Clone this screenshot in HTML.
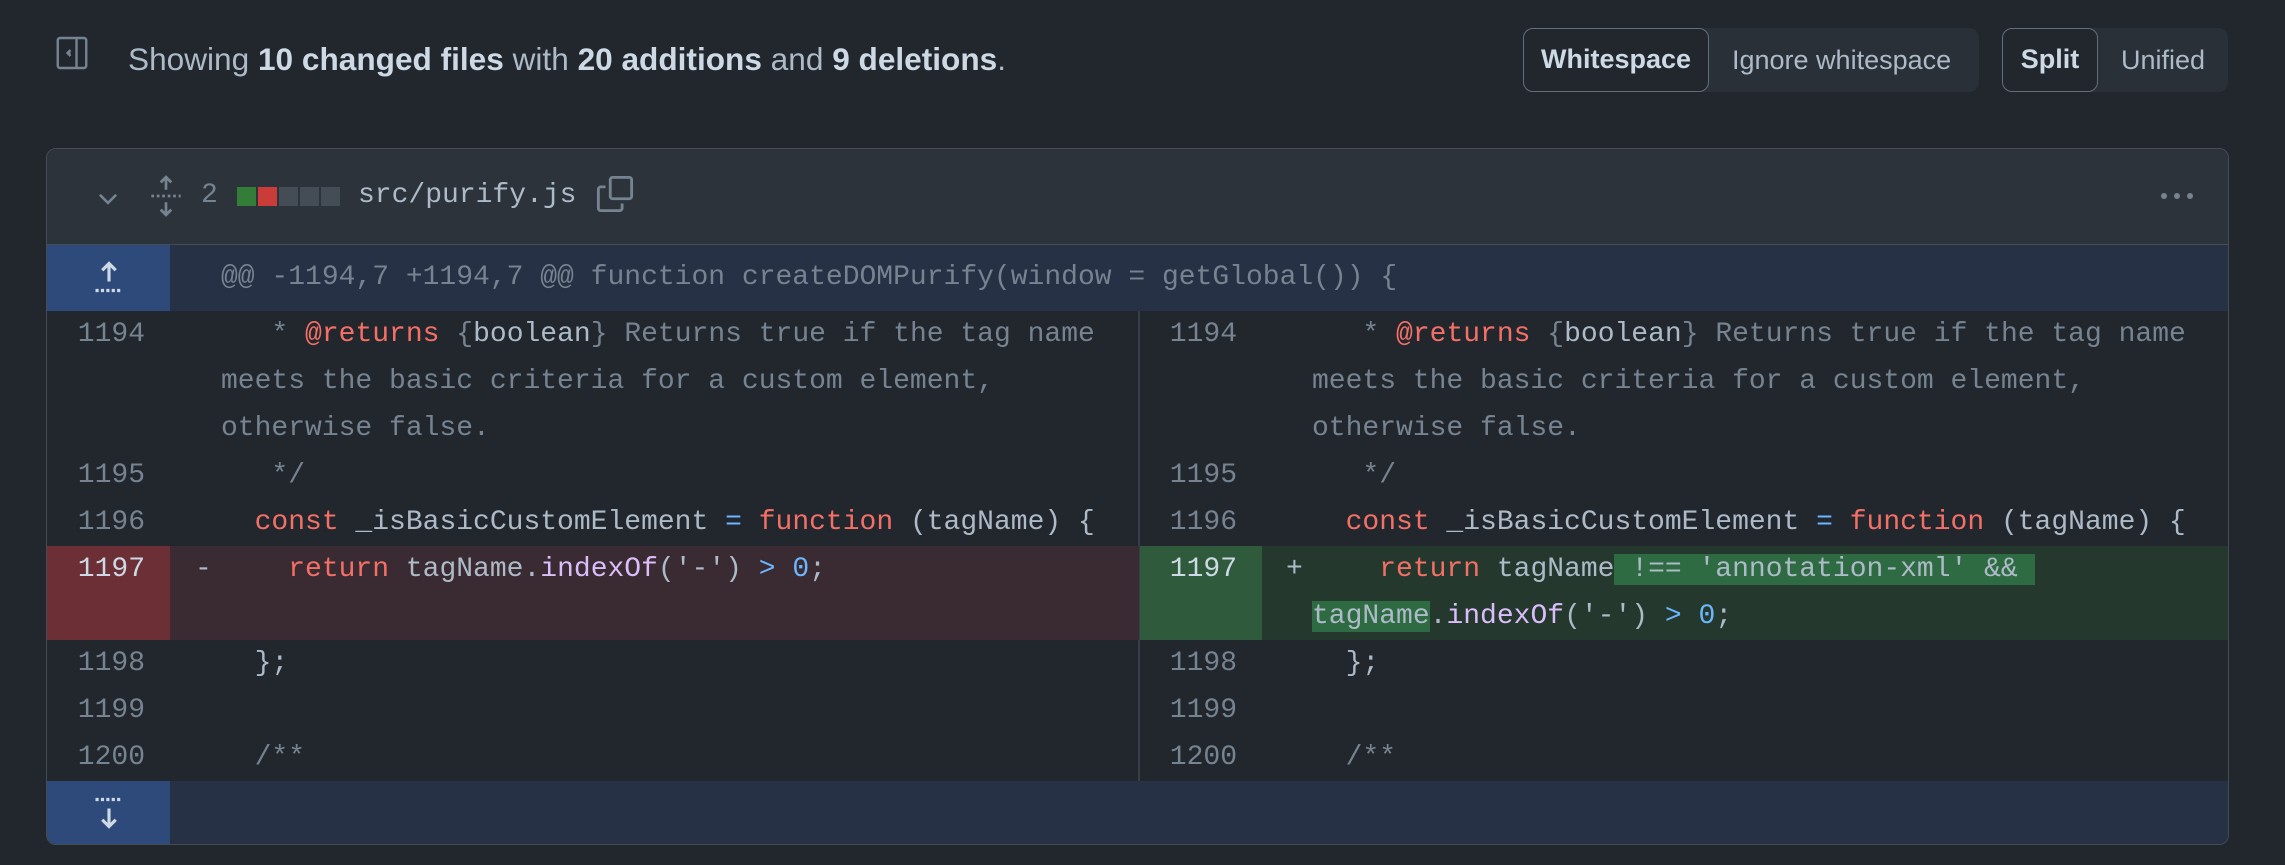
<!DOCTYPE html>
<html><head><meta charset="utf-8"><style>
*{margin:0;padding:0;box-sizing:border-box}
body{width:2285px;height:865px;background:#22272e;position:relative;overflow:hidden;font-family:"Liberation Sans",sans-serif;color:#adbac7}
.abs{position:absolute}
.summary{left:128px;top:38px;font-size:31.6px;line-height:42px;color:#adbac7;white-space:nowrap}
.summary b{color:#cdd9e5}
.grp{position:absolute;top:28px;height:64px;background:#2a3038;border-radius:10px}
.sel{position:absolute;top:28px;height:64px;border:1.5px solid #636e7b;border-radius:10px;background:#22272e;font-weight:bold;color:#cdd9e5;font-size:27px;line-height:61px;text-align:center}
.opt{position:absolute;top:28px;height:64px;font-size:27px;line-height:64px;color:#adbac7;white-space:nowrap}
.card{left:46px;top:148px;width:2183px;height:697px;border:1.5px solid #444c56;border-radius:10px;overflow:hidden;background:#22272e}
.hdr{position:absolute;left:0;top:0;width:100%;height:96px;background:#2d333b;border-bottom:1.5px solid #444c56}
.mono{font-family:"Liberation Mono",monospace;font-size:28px;white-space:pre}
.hunk{position:absolute;left:0;top:96px;width:100%;height:66px;background:#263145}
.hg{position:absolute;left:0;width:123px;background:#2e4a7a}
.row{position:absolute;left:0;width:100%;line-height:47px}
.ln{position:absolute;width:98px;text-align:right;color:#768390}
.code{position:absolute;color:#adbac7}
.k{color:#f47067}.c{color:#768390}.f{color:#dcbdfb}.b{color:#6cb6ff}
.hl{background:#2f6b42}
</style></head><body>
<svg class="abs" style="left:54px;top:35px" width="36" height="36" viewBox="0 0 24 24" fill="none" stroke="#768390" stroke-width="1.6"><rect x="2.5" y="2" width="19" height="20" rx="1.5"/><line x1="15" y1="2" x2="15" y2="22"/><path d="M11 10l-2 2 2 2" fill="#768390"/></svg>
<div class="abs summary">Showing <b>10 changed files</b> with <b>20 additions</b> and <b>9 deletions</b>.</div>

<div class="grp" style="left:1523px;width:456px"></div>
<div class="sel" style="left:1523px;width:186px">Whitespace</div>
<div class="opt" style="left:1732px">Ignore whitespace</div>
<div class="grp" style="left:2002px;width:226px"></div>
<div class="sel" style="left:2002px;width:96px">Split</div>
<div class="opt" style="left:2121px">Unified</div>

<div class="abs card">
 <div class="hdr">
  <svg class="abs" style="left:48px;top:36px" width="26" height="26" viewBox="0 0 16 16" fill="none" stroke="#768390" stroke-width="1.6"><path d="M3 6l5 5 5-5"/></svg>
  <svg class="abs" style="left:102px;top:26px" width="34" height="42" viewBox="0 0 16 20" fill="none" stroke="#768390" stroke-width="1.3"><path d="M8 1v6M5.5 3.5L8 1l2.5 2.5M8 19v-6M5.5 16.5L8 19l2.5-2.5"/><path d="M1 10h14" stroke-dasharray="1.3 1.3"/></svg>
  <div class="abs mono" style="left:154px;top:27px;color:#768390;line-height:40px">2</div>
  <div class="abs" style="left:190px;top:38px;width:19px;height:19px;background:#347d39"></div>
  <div class="abs" style="left:211px;top:38px;width:19px;height:19px;background:#c93c37"></div>
  <div class="abs" style="left:232px;top:38px;width:19px;height:19px;background:#444c56"></div>
  <div class="abs" style="left:253px;top:38px;width:19px;height:19px;background:#444c56"></div>
  <div class="abs" style="left:274px;top:38px;width:19px;height:19px;background:#444c56"></div>
  <div class="abs mono" style="left:311px;top:27px;color:#adbac7;line-height:40px">src/purify.js</div>
  <svg class="abs" style="left:549px;top:25px" width="38" height="40" viewBox="0 0 16 16" fill="none" stroke="#768390" stroke-width="1.2"><rect x="6" y="1" width="9" height="9" rx="1"/><path d="M4 5H2a1 1 0 0 0-1 1v8a1 1 0 0 0 1 1h8a1 1 0 0 0 1-1v-2"/></svg>
  <svg class="abs" style="left:2110px;top:41px" width="40" height="12" viewBox="0 0 40 12" fill="#768390"><circle cx="7" cy="6" r="3"/><circle cx="20" cy="6" r="3"/><circle cx="33" cy="6" r="3"/></svg>
 </div>
 <div class="hunk">
  <div class="hg" style="top:0;height:66px"></div>
  <svg class="abs" style="left:44px;top:14px" width="36" height="36" viewBox="0 0 16 16" fill="none" stroke="#cdd9e5" stroke-width="1.4"><path d="M8 10V2M5 5l3-3 3 3"/><path d="M2 14h12" stroke-dasharray="1.4 1"/></svg>
  <div class="abs mono" style="left:174px;top:9px;line-height:47px;color:#768390">@@ -1194,7 +1194,7 @@ function createDOMPurify(window = getGlobal()) {</div>
 </div>

 <div class="abs" style="left:1091px;top:162px;width:1.5px;height:470px;background:#373e47"></div>
 <div class="abs" style="left:0;top:397px;width:1092px;height:94px;background:#3a2a31"></div>
 <div class="abs" style="left:0;top:397px;width:123px;height:94px;background:#6b2f35"></div>
 <div class="abs" style="left:1093px;top:397px;width:1090px;height:94px;background:#24382d"></div>
 <div class="abs" style="left:1093px;top:397px;width:122px;height:94px;background:#2f5a3b"></div>

 <div class="mono">
 <div class="row" style="top:162px"><span class="ln" style="left:0">1194</span><span class="code" style="left:174px">   <span class="c">*</span> <span class="k">@returns</span> <span class="c">{</span>boolean<span class="c">} Returns true if the tag name
meets the basic criteria for a custom element,
otherwise false.</span></span></div>
 <div class="row" style="top:303px"><span class="ln" style="left:0">1195</span><span class="code c" style="left:174px">   */</span></div>
 <div class="row" style="top:350px"><span class="ln" style="left:0">1196</span><span class="code" style="left:174px">  <span class="k">const</span> _isBasicCustomElement <span class="b">=</span> <span class="k">function</span> (tagName) {</span></div>
 <div class="row" style="top:397px"><span class="ln" style="left:0;color:#cdd9e5">1197</span><span class="code" style="left:148px">-</span><span class="code" style="left:174px">    <span class="k">return</span> tagName.<span class="f">indexOf</span>('-') <span class="b">&gt;</span> <span class="b">0</span>;</span></div>
 <div class="row" style="top:491px"><span class="ln" style="left:0">1198</span><span class="code" style="left:174px">  };</span></div>
 <div class="row" style="top:538px"><span class="ln" style="left:0">1199</span></div>
 <div class="row" style="top:585px"><span class="ln" style="left:0">1200</span><span class="code c" style="left:174px">  /**</span></div>
 <div class="row" style="top:162px"><span class="ln" style="left:1092px">1194</span><span class="code" style="left:1265px">   <span class="c">*</span> <span class="k">@returns</span> <span class="c">{</span>boolean<span class="c">} Returns true if the tag name
meets the basic criteria for a custom element,
otherwise false.</span></span></div>
 <div class="row" style="top:303px"><span class="ln" style="left:1092px">1195</span><span class="code c" style="left:1265px">   */</span></div>
 <div class="row" style="top:350px"><span class="ln" style="left:1092px">1196</span><span class="code" style="left:1265px">  <span class="k">const</span> _isBasicCustomElement <span class="b">=</span> <span class="k">function</span> (tagName) {</span></div>
 <div class="row" style="top:397px"><span class="ln" style="left:1092px;color:#cdd9e5">1197</span><span class="code" style="left:1239px">+</span><span class="code" style="left:1265px">    <span class="k">return</span> tagName<span class="hl"> !== 'annotation-xml' &amp;&amp; </span>
<span class="hl">tagName</span>.<span class="f">indexOf</span>('-') <span class="b">&gt;</span> <span class="b">0</span>;</span></div>
 <div class="row" style="top:491px"><span class="ln" style="left:1092px">1198</span><span class="code" style="left:1265px">  };</span></div>
 <div class="row" style="top:538px"><span class="ln" style="left:1092px">1199</span></div>
 <div class="row" style="top:585px"><span class="ln" style="left:1092px">1200</span><span class="code c" style="left:1265px">  /**</span></div>
 </div>

 <div class="abs" style="left:0;top:632px;width:100%;height:65px;background:#263145"></div>
 <div class="hg" style="top:632px;height:65px"></div>
 <svg class="abs" style="left:44px;top:646px" width="36" height="36" viewBox="0 0 16 16" fill="none" stroke="#cdd9e5" stroke-width="1.4"><path d="M2 2h12" stroke-dasharray="1.4 1"/><path d="M8 6v8M5 11l3 3 3-3"/></svg>
</div>
</body></html>
